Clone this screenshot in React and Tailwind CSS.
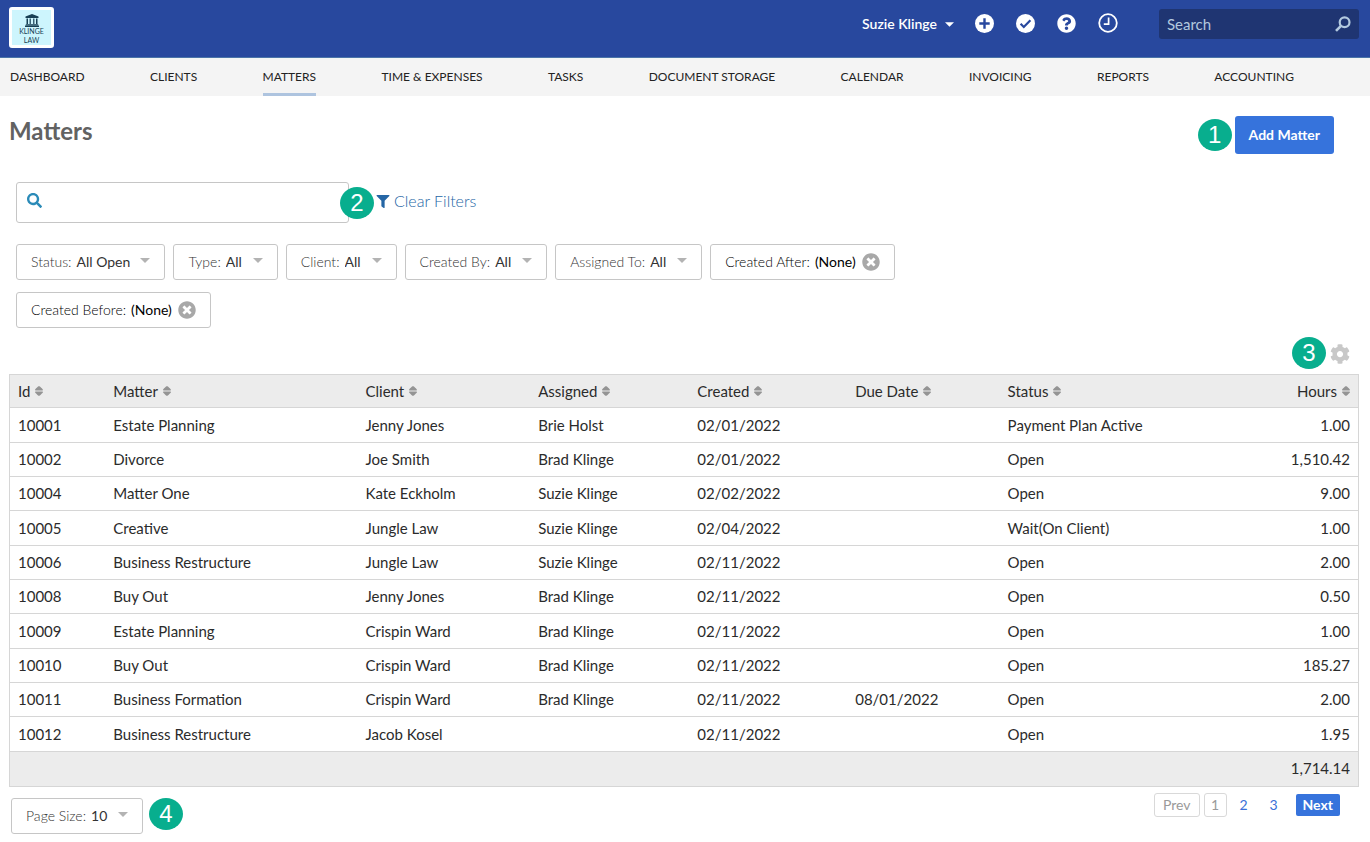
import React from "react";
import { FaCog, FaFilter, FaQuestionCircle, FaSearch, FaTimesCircle } from "react-icons/fa";

const NAV_ITEMS = [
  "Dashboard",
  "Clients",
  "Matters",
  "Time & Expenses",
  "Tasks",
  "Document Storage",
  "Calendar",
  "Invoicing",
  "Reports",
  "Accounting",
];

const COLUMNS = [
  { label: "Id", width: "w-[7.1%]" },
  { label: "Matter", width: "w-[18.7%]" },
  { label: "Client", width: "w-[12.8%]" },
  { label: "Assigned", width: "w-[11.8%]" },
  { label: "Created", width: "w-[11.7%]" },
  { label: "Due Date", width: "w-[11.3%]" },
  { label: "Status", width: "w-[14.6%]" },
  { label: "Hours", width: "w-[12%]", right: true },
];

const MATTERS = [
  ["10001", "Estate Planning", "Jenny Jones", "Brie Holst", "02/01/2022", "", "Payment Plan Active", "1.00"],
  ["10002", "Divorce", "Joe Smith", "Brad Klinge", "02/01/2022", "", "Open", "1,510.42"],
  ["10004", "Matter One", "Kate Eckholm", "Suzie Klinge", "02/02/2022", "", "Open", "9.00"],
  ["10005", "Creative", "Jungle Law", "Suzie Klinge", "02/04/2022", "", "Wait(On Client)", "1.00"],
  ["10006", "Business Restructure", "Jungle Law", "Suzie Klinge", "02/11/2022", "", "Open", "2.00"],
  ["10008", "Buy Out", "Jenny Jones", "Brad Klinge", "02/11/2022", "", "Open", "0.50"],
  ["10009", "Estate Planning", "Crispin Ward", "Brad Klinge", "02/11/2022", "", "Open", "1.00"],
  ["10010", "Buy Out", "Crispin Ward", "Brad Klinge", "02/11/2022", "", "Open", "185.27"],
  ["10011", "Business Formation", "Crispin Ward", "Brad Klinge", "02/11/2022", "08/01/2022", "Open", "2.00"],
  ["10012", "Business Restructure", "Jacob Kosel", "", "02/11/2022", "", "Open", "1.95"],
];

const FILTERS = [
  { label: "Status", value: "All Open" },
  { label: "Type", value: "All" },
  { label: "Client", value: "All" },
  { label: "Created By", value: "All" },
  { label: "Assigned To", value: "All" },
];

const Badge = ({ children }) => (
  <span className="flex h-8 w-[34px] shrink-0 items-center justify-center rounded-[50%] bg-[#08ae8e] font-['Liberation_Sans',sans-serif] text-2xl leading-8 text-white">
    {children}
  </span>
);

const Caret = ({ className }) => (
  <svg viewBox="0 0 10 5" className={className} aria-hidden="true">
    <path d="M0 0h10L5 5z" fill="currentColor" />
  </svg>
);

const SortIcon = () => (
  <svg viewBox="0 0 8 10" className="h-[10px] w-2 text-[#949494]" aria-hidden="true">
    <path d="M4 0C4.5 0 8 3.3 8 3.7S7.7 4.4 7.4 4.4H.6C.3 4.4 0 4.1 0 3.7S3.5 0 4 0zM4 10C3.5 10 0 6.7 0 6.3s.3-.7.6-.7h6.8c.3 0 .6.3.6.7S4.5 10 4 10z" fill="currentColor" />
  </svg>
);

const PlusIcon = () => (
  <svg viewBox="0 0 19 19" className="h-[19px] w-[19px]" aria-hidden="true">
    <circle cx="9.5" cy="9.5" r="9.5" fill="currentColor" />
    <path d="M9.5 4.3v10.4M4.3 9.5h10.4" stroke="#28489e" strokeWidth="2.4" />
  </svg>
);

const CheckIcon = () => (
  <svg viewBox="0 0 19 19" className="h-[19px] w-[19px]" aria-hidden="true">
    <circle cx="9.5" cy="9.5" r="9.5" fill="currentColor" />
    <path d="M4.6 9.8l3.2 3.2 6.6-6.8" fill="none" stroke="#28489e" strokeWidth="2.2" />
  </svg>
);

const ClockIcon = () => (
  <svg viewBox="0 0 20 20" className="h-5 w-5" fill="none" stroke="currentColor" aria-hidden="true">
    <circle cx="10" cy="10" r="8.8" strokeWidth="1.8" />
    <path d="M10.6 4.6V11.2H5.8" strokeWidth="1.7" />
  </svg>
);

const HeaderSearchIcon = () => (
  <svg viewBox="0 0 16 16" className="h-4 w-4" fill="none" stroke="currentColor" aria-hidden="true">
    <circle cx="9.6" cy="6.2" r="4.9" strokeWidth="2.2" />
    <path d="M6 9.8L1 14.9" strokeWidth="2.6" />
  </svg>
);

const Logo = () => (
  <a
    href="#home"
    aria-label="Klinge Law"
    className="flex h-[41px] w-[45px] flex-col items-center rounded-[3px] border-3 border-white bg-[#cdf5fd] pt-1 text-[#173f54]"
  >
    <svg viewBox="0 0 14 13" className="h-[13px] w-[14px]" fill="currentColor" aria-hidden="true">
      <path d="M7 0l6.5 2.6V4H.5V2.6zM1.5 4.5H3V10H1.5zM4.6 4.5h1.2V10H4.6zM8.2 4.5h1.2V10H8.2zM11 4.5h1.5V10H11zM.8 10.2h12.4v1H.8zM0 11.6h14V13H0z" />
    </svg>
    <span className="text-center text-[7px] leading-[9px]">
      KLINGE
      <br />
      LAW
    </span>
  </a>
);

const SelectBox = ({ label, value }) => (
  <label className="flex h-9 items-center rounded-[3px] border border-[#c6c6c6] px-[14px] pb-px text-sm text-[#333]">
    <span className="font-light">{label}:</span>
    <select className="ml-[5px] appearance-none bg-transparent outline-none" defaultValue={value}>
      <option>{value}</option>
    </select>
    <Caret className="mb-[2px] ml-[10px] h-[5px] w-[10px] text-[#b3b3b3]" />
  </label>
);

const DateFilter = ({ label }) => (
  <div className="flex h-9 items-center rounded-[3px] border border-[#c6c6c6] px-[14px] text-sm text-black">
    <button type="button" className="flex gap-[5px] pb-px">
      <span className="font-light">{label}:</span>
      <span>(None)</span>
    </button>
    <button type="button" aria-label={`Clear ${label}`} className="ml-[6px] text-[#a8a8a8]">
      <FaTimesCircle className="h-[18px] w-[18px]" />
    </button>
  </div>
);

const Header = () => (
  <header className="flex h-[58px] items-start justify-between border-b border-[#4a74a8] bg-[#28489e] pl-[9px] pr-[11px] text-white">
    <div className="pt-[7px]">
      <Logo />
    </div>
    <div className="flex items-center pt-[9px]">
      <button type="button" className="mr-[21px] flex items-center text-sm font-semibold">
        Suzie Klinge
        <Caret className="ml-2 h-[5px] w-[9px]" />
      </button>
      <div className="mr-[41px] flex items-center gap-[22px] pb-[2px]">
        <button type="button" aria-label="Add">
          <PlusIcon />
        </button>
        <button type="button" aria-label="Tasks">
          <CheckIcon />
        </button>
        <button type="button" aria-label="Help">
          <FaQuestionCircle className="h-[19px] w-[19px]" />
        </button>
        <button type="button" aria-label="Timer">
          <ClockIcon />
        </button>
      </div>
      <div className="flex h-[30px] w-[200px] items-center rounded-[3px] bg-[#1f3572] px-2 text-[#b3c9df]">
        <input
          type="text"
          aria-label="Search"
          placeholder="Search"
          className="min-w-0 flex-1 bg-transparent text-[15px] outline-none placeholder:text-[#b3c9df]"
        />
        <button type="button" aria-label="Run search" className="pb-px">
          <HeaderSearchIcon />
        </button>
      </div>
    </div>
  </header>
);

const NavBar = () => (
  <nav className="flex h-[38px] justify-between bg-[#f4f4f4] pl-[10px] pr-[76px] text-xs text-[#222] uppercase">
    {NAV_ITEMS.map((item) => (
      <a
        key={item}
        href="#nav"
        className={`flex items-center border-b-3 pt-[2px] ${
          item === "Matters" ? "border-[#aec4df]" : "border-transparent"
        }`}
      >
        {item}
      </a>
    ))}
  </nav>
);

const MattersTable = () => (
  <table className="w-full table-fixed border-collapse border border-[#d6d6d6] text-[15px] leading-5 text-[#2b2b2b]">
    <thead>
      <tr className="h-[33px] border-b border-[#d6d6d6] bg-[#ececec]">
        {COLUMNS.map(({ label, width, right }) => (
          <th key={label} className={`${width} px-2 pb-[3px] font-normal ${right ? "text-right" : "text-left"}`}>
            <button type="button" className="inline-flex items-center gap-[5px] align-middle">
              {label}
              <SortIcon />
            </button>
          </th>
        ))}
      </tr>
    </thead>
    <tbody>
      {MATTERS.map((row) => (
        <tr key={row[0]} className="h-[34px] border-b border-[#d6d6d6] nth-[3n+1]:h-[35px]">
          {row.map((cell, i) => (
            <td key={i} className={`px-2 pb-px ${i === 7 ? "text-right" : ""}`}>
              {cell}
            </td>
          ))}
        </tr>
      ))}
    </tbody>
    <tfoot>
      <tr className="h-[35px] bg-[#ececec]">
        <td colSpan={8} className="px-2 pb-[2px] text-right">
          1,714.14
        </td>
      </tr>
    </tfoot>
  </table>
);

const Pagination = () => (
  <nav aria-label="Pages" className="mr-[19px] mt-[6px] flex h-6 items-center text-sm text-[#3a70d8]">
    <button type="button" disabled className="h-6 rounded-[3px] border border-[#d9d9d9] px-2 text-[#9a9a9a]">
      Prev
    </button>
    <button
      type="button"
      aria-current="page"
      className="ml-1 h-6 w-[23px] rounded-[3px] border border-[#d9d9d9] text-[#9a9a9a]"
    >
      1
    </button>
    <a href="#page-2" className="ml-[6px] w-[22px] text-center">
      2
    </a>
    <a href="#page-3" className="ml-2 w-[22px] text-center">
      3
    </a>
    <button type="button" className="ml-[11px] h-[22px] rounded-[2px] bg-[#3673dc] px-[7px] font-bold text-white">
      Next
    </button>
  </nav>
);

const App = () => (
  <div className="min-h-screen bg-white font-[Lato,'Open_Sans',sans-serif]">
    <Header />
    <NavBar />

    <main className="pl-[9px] pr-[11px]">
      <div className="flex items-start justify-between pt-5 pr-[25px]">
        <h1 className="text-2xl leading-[30px] font-bold text-[#626262]">Matters</h1>
        <div className="flex items-center gap-[3px]">
          <Badge>1</Badge>
          <button
            type="button"
            className="h-[38px] rounded-[3px] bg-[#3673dc] px-[14px] pb-px text-sm font-bold text-white"
          >
            Add Matter
          </button>
        </div>
      </div>

      {/* Search and filters */}
      <div className="mt-7 flex items-center pl-[7px]">
        <div className="flex h-[41px] w-[333px] items-center rounded-[3px] border border-[#c6c6c6] px-[10px]">
          <FaSearch className="mb-1 h-[15px] w-[15px] text-[#2b8bb8]" />
          <input type="text" aria-label="Search matters" className="ml-2 min-w-0 flex-1 bg-transparent outline-none" />
        </div>
        <div className="relative -ml-[9px]">
          <Badge>2</Badge>
        </div>
        <button type="button" className="ml-[2px] flex items-center gap-1 pb-[3px] text-base font-light text-[#2566a5]">
          <FaFilter className="h-[13px] w-[14px]" />
          Clear Filters
        </button>
      </div>
      <div className="mt-[21px] flex w-3/4 flex-wrap gap-x-2 gap-y-3 pl-[7px]">
        {FILTERS.map((filter) => (
          <SelectBox key={filter.label} {...filter} />
        ))}
        <DateFilter label="Created After" />
        <DateFilter label="Created Before" />
      </div>

      <div className="mt-[9px] mb-[5px] flex items-center justify-end gap-1 pr-[9px]">
        <Badge>3</Badge>
        <button type="button" aria-label="Table settings" className="pt-[2px] text-[#c8c8c8]">
          <FaCog className="h-5 w-5" />
        </button>
      </div>

      <MattersTable />

      <div className="flex items-start justify-between">
        <div className="mt-[11px] ml-[2px] flex items-start gap-[6px]">
          <SelectBox label="Page Size" value="10" />
          <Badge>4</Badge>
        </div>
        <Pagination />
      </div>
    </main>
  </div>
);

export default App;
